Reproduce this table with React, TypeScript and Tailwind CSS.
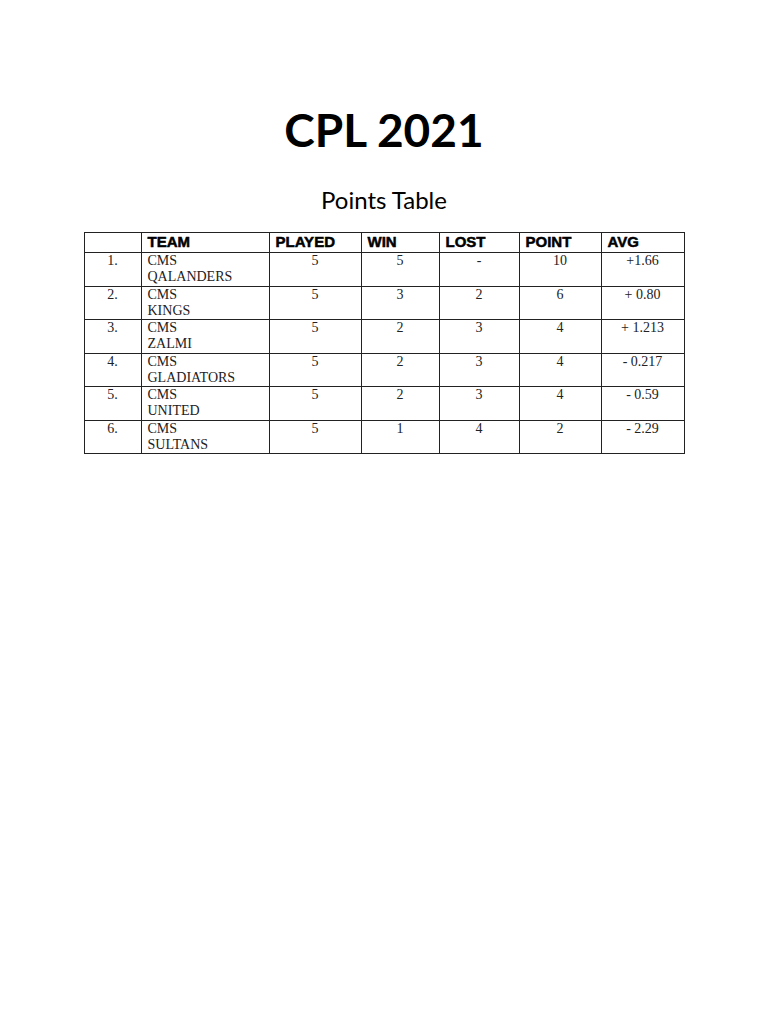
const rows = [
  { n: "1.", team: "QALANDERS", played: "5", win: "5", lost: "-", point: "10", avg: "+1.66" },
  { n: "2.", team: "KINGS", played: "5", win: "3", lost: "2", point: "6", avg: "+ 0.80" },
  { n: "3.", team: "ZALMI", played: "5", win: "2", lost: "3", point: "4", avg: "+ 1.213" },
  { n: "4.", team: "GLADIATORS", played: "5", win: "2", lost: "3", point: "4", avg: "- 0.217" },
  { n: "5.", team: "UNITED", played: "5", win: "2", lost: "3", point: "4", avg: "- 0.59" },
  { n: "6.", team: "SULTANS", played: "5", win: "1", lost: "4", point: "2", avg: "- 2.29" },
];

const th =
  "border border-[#222] px-[6px] text-left align-top font-bold text-[15px] leading-[18px] [-webkit-text-stroke:0.5px_black]";
const td = "border border-[#222] text-center align-top";

export default function App() {
  return (
    <div className="min-h-[1024px] w-[768px] bg-white text-black">
      <div className="flex flex-col items-center pt-[102px]">
        <h1 className="font-['Lato','Open_Sans',sans-serif] text-[46px] font-bold leading-[56px]">CPL 2021</h1>
        <p className="mt-[27px] font-['Lato','Open_Sans',sans-serif] text-[24px] leading-[30px]">Points Table</p>
      </div>

      <table className="mx-auto mt-[17px] w-[600px] table-fixed border-collapse font-['Liberation_Sans',Arial,sans-serif]">
        <colgroup>
          <col className="w-[57px]" />
          <col className="w-[128px]" />
          <col className="w-[92px]" />
          <col className="w-[78px]" />
          <col className="w-[80px]" />
          <col className="w-[82px]" />
          <col className="w-[83px]" />
        </colgroup>
        <thead>
          <tr className="h-[20px]">
            <th className={th}></th>
            <th className={th}>TEAM</th>
            <th className={th}>PLAYED</th>
            <th className={th}>WIN</th>
            <th className={th}>LOST</th>
            <th className={th}>POINT</th>
            <th className={th}>AVG</th>
          </tr>
        </thead>
        <tbody className="font-['Liberation_Serif','Times_New_Roman',serif] text-[14px] leading-[16px] text-[#222]">
          {rows.map((r) => (
            <tr key={r.n} className="h-[33.5px]">
              <td className={td}>{r.n}</td>
              <td className="border border-[#222] px-[6px] text-left align-top">
                CMS
                <br />
                {r.team}
              </td>
              <td className={td}>{r.played}</td>
              <td className={td}>{r.win}</td>
              <td className={td}>{r.lost}</td>
              <td className={td}>{r.point}</td>
              <td className={td}>{r.avg}</td>
            </tr>
          ))}
        </tbody>
      </table>
    </div>
  );
}
